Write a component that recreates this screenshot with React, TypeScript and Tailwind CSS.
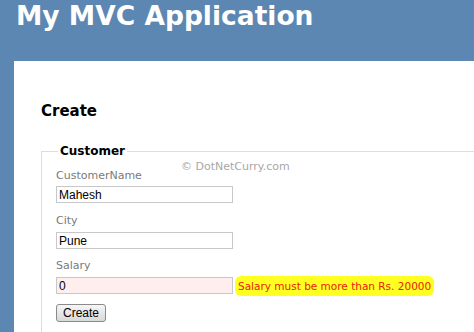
import React from "react"

const labelCls = "block text-[11px] leading-[14px] text-[#7a7a7a] font-['DejaVu_Sans',sans-serif]"
const inputCls =
  "block w-[177px] h-[17px] border border-[#c8c8c8] px-[2px] text-[12px] leading-[15px] text-black font-['Liberation_Sans',Arial,sans-serif] outline-none"

export default function App() {
  return (
    <div className="relative h-[332px] w-[474px] overflow-hidden bg-[#5c87b2] font-['DejaVu_Sans',Verdana,sans-serif]">
      {/* header */}
      <h1 className="h-[61px] pl-[16px] pt-[1px] text-[26.5px] font-bold leading-[30px] text-white">
        My MVC Application
      </h1>

      {/* main panel */}
      <div className="ml-[14px] h-[271px] bg-white pl-[27px] pt-[41px]">
        <h2 className="text-[15px] font-bold leading-[18px] text-black">Create</h2>

        <fieldset className="mt-[24px] w-[460px] border border-[#dddddd] pb-[20px] pl-[14px]">
          <legend className="ml-[2px] px-[2px] text-[12px] font-bold leading-[14px] text-black">Customer</legend>

          <div className="mt-[11px]">
            <label className={labelCls}>CustomerName</label>
            <input className={`mt-[3px] ${inputCls}`} defaultValue="Mahesh" />
          </div>

          <div className="mt-[11px]">
            <label className={labelCls}>City</label>
            <input className={`mt-[4px] ${inputCls}`} defaultValue="Pune" />
          </div>

          <div className="mt-[10px]">
            <label className={labelCls}>Salary</label>
            <div className="mt-[4px] flex h-[17px] items-center">
              <input className={`${inputCls} bg-[#ffeeee]`} defaultValue="0" />
              <span className="ml-[2px] rounded-[6px] bg-[#ffff22] px-[3px] py-[3px] text-[10.5px] leading-[14px] text-[#e8220a]">
                Salary must be more than Rs. 20000
              </span>
            </div>
          </div>

          <button className="mt-[10px] h-[18px] w-[50px] rounded-[3px] border border-[#8a8a8a] bg-gradient-to-b from-[#f6f6f6] to-[#d9d9d9] text-[12px] leading-[14px] text-black font-['Liberation_Sans',Arial,sans-serif]">
            Create
          </button>
        </fieldset>
      </div>

      {/* watermark */}
      <div className="absolute left-[181px] top-[160px] text-[11px] leading-[14px] text-[#a8a8a8] font-['DejaVu_Sans',sans-serif]">
        © DotNetCurry.com
      </div>
    </div>
  )
}
